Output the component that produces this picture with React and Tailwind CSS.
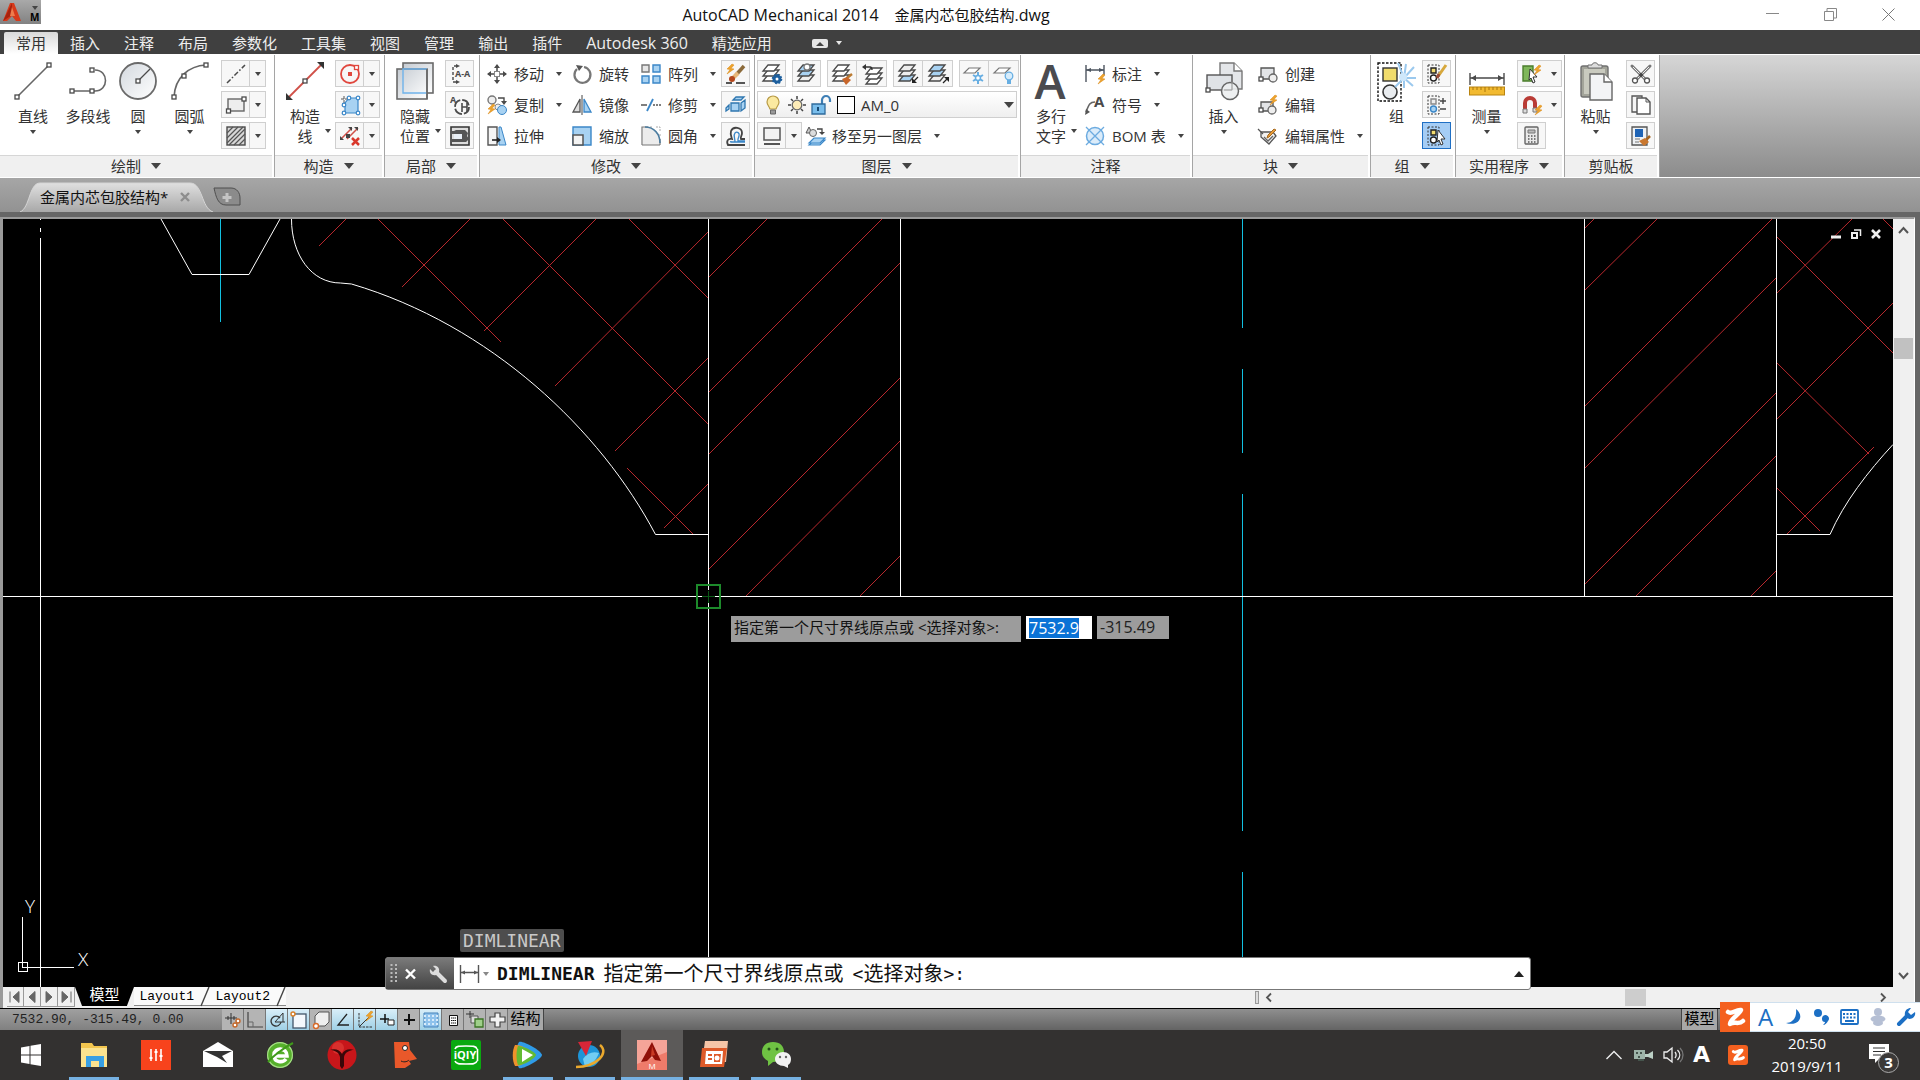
import { useState } from 'react';

const DARK = '#4a4a4a';
const BLUE = '#3b87c8';
const SKY = '#a8d2f2';
const GOLD = '#eda32c';

function Svg({ w = 20, h = 20, children }) {
  return (
    <svg width={w} height={h} viewBox={`0 0 ${w} ${h}`} fill="none" className="block shrink-0 overflow-visible" aria-hidden="true">
      {children}
    </svg>
  );
}

function Node({ x, y, c = DARK }) {
  return <rect x={x - 2} y={y - 2} width="4" height="4" fill="#fff" stroke={c} strokeWidth="1.3" />;
}

function Bolt({ x = 0, y = 0 }) {
  return <path transform={`translate(${x} ${y})`} d="M6 0 1 5l3 .5L1 10l7-5-3-.5L8 1z" fill={GOLD} stroke="#d98818" strokeWidth=".5" />;
}

function Sheet({ x = 0, y = 0, fill = '#fff', stroke = DARK }) {
  return <path transform={`translate(${x} ${y})`} d="M5 0h11l-5 5H0z" fill={fill} stroke={stroke} strokeWidth="1.2" />;
}

function Stack({ top = '#fff', bottom = '#fff' }) {
  return (
    <g stroke={DARK} strokeWidth="1.3">
      <path d="M6 11h11l-5 6H1z" fill={bottom} />
      <path d="M6 6h11l-5 6H1z" fill={top} />
      <path d="M6 1h11l-5 6H1z" fill={top} />
    </g>
  );
}

// Large ribbon icons, 38px square

const LineIcon = () => (
  <Svg w={38} h={38}>
    <path d="M3 35 35 3" stroke="#666" strokeWidth="1.6" />
    <Node x={3} y={35} />
    <Node x={35} y={3} />
  </Svg>
);

const PolylineIcon = () => (
  <Svg w={38} h={38}>
    <path d="M3 29h23c14 0 14-21 0-21" stroke="#666" strokeWidth="1.6" />
    <Node x={3} y={29} />
    <Node x={23} y={29} />
    <Node x={23} y={8} />
  </Svg>
);

const CircleIcon = () => (
  <Svg w={38} h={38}>
    <defs>
      <linearGradient id="disc" x1="0" y1="0" x2="1" y2="1">
        <stop offset="0" stopColor="#d3d8de" />
        <stop offset="1" stopColor="#fff" />
      </linearGradient>
    </defs>
    <circle cx="19" cy="19" r="18" fill="url(#disc)" stroke="#6a6a6a" strokeWidth="1.8" />
    <path d="M19 19 31 7" stroke={DARK} strokeWidth="1.3" />
    <Node x={19} y={19} />
  </Svg>
);

const ArcIcon = () => (
  <Svg w={38} h={38}>
    <path d="M3 35C4 15 18 4 35 3" stroke="#666" strokeWidth="1.6" />
    <Node x={3} y={35} />
    <Node x={13} y={14} />
    <Node x={35} y={3} />
  </Svg>
);

const XlineIcon = () => (
  <Svg w={38} h={38}>
    <path d="M3 35 35 3" stroke="#d05048" strokeWidth="1.8" />
    <path d="M0 38v-7l7 7zM38 0v7l-7-7z" fill="#333" />
    <Node x={19} y={19} />
  </Svg>
);

const HideIcon = () => (
  <Svg w={38} h={38}>
    <defs>
      <linearGradient id="plate" x1="0" y1="0" x2="1" y2="1">
        <stop offset="0" stopColor="#c5cbd2" />
        <stop offset="1" stopColor="#fff" />
      </linearGradient>
    </defs>
    <rect x="7" y="1" width="30" height="30" fill="url(#plate)" stroke="#6a6a6a" strokeWidth="1.6" />
    <rect x="1" y="7" width="30" height="30" fill="url(#plate)" stroke="#6a6a6a" strokeWidth="1.6" />
    <path d="M31 31H7V7h24" stroke="#6fb3ea" strokeWidth="1.4" />
    <path d="M31 7v30" stroke="#6a6a6a" strokeWidth="1.6" />
  </Svg>
);

const MtextIcon = () => (
  <Svg w={38} h={38}>
    <text x="18" y="37" textAnchor="middle" fontFamily="Open Sans" fontWeight="600" fontSize="47" fill="#4b4b4f">A</text>
  </Svg>
);

const InsertIcon = () => (
  <Svg w={38} h={38}>
    <path d="M15 1h14l8 8v18H15z" fill="#e4e6e9" stroke="#777" strokeWidth="1.4" />
    <path d="M29 1v8h8" fill="#fff" stroke="#777" strokeWidth="1.4" />
    <rect x="2" y="13" width="25" height="15" fill="#dfe2e6" stroke="#555" strokeWidth="1.4" />
    <circle cx="25" cy="29" r="8.5" fill="#eceef0" fillOpacity=".9" stroke="#666" strokeWidth="1.5" />
    <path d="M27 20v8h-8" stroke="#999" />
    <Node x={3} y={28} />
  </Svg>
);

const GroupIcon = () => (
  <Svg w={40} h={40}>
    <rect x="1" y="1" width="23" height="38" stroke="#111" strokeWidth="1.4" strokeDasharray="2.5 1.5" />
    <rect x="6" y="6" width="14" height="13" fill="#f1dc6c" stroke="#333" strokeWidth="1.4" />
    <circle cx="13" cy="30" r="7" fill="#e9ecef" stroke="#333" strokeWidth="1.6" />
    <path d="M27 16 21 1M27 16 29 2M27 16 37 5M27 16h12M27 16l9 8M27 16v10M27 16l-9 9" stroke="#9bc9ee" strokeWidth="2" />
    <circle cx="26" cy="15" r="4" fill="#cfe8fb" />
  </Svg>
);

const MeasureIcon = () => (
  <Svg w={38} h={38}>
    <path d="M2 11v12M36 11v12M2 16h34" stroke={DARK} strokeWidth="1.4" />
    <path d="m3 16 5-3v6zM35 16l-5-3v6z" fill={DARK} />
    <rect x="1.5" y="25" width="35" height="8" fill="#f2ba31" stroke="#b98410" />
    <path d="M5 25v3M9 25v3M13 25v3M17 25v5M21 25v3M25 25v3M29 25v3M33 25v3" stroke="#a8760d" />
  </Svg>
);

const PasteIcon = () => (
  <Svg w={38} h={38}>
    <rect x="4" y="4" width="27" height="31" rx="2" fill="#a3a49a" stroke="#707070" strokeWidth="1.4" />
    <rect x="7" y="7" width="21" height="25" fill="#c9cabf" />
    <path d="M11 6V3h4c0-3 6-3 6 0h4v3z" fill="#ddd" stroke="#707070" />
    <path d="M13 12h14l8 8v18H13z" fill="#f3f4f6" stroke="#666" strokeWidth="1.4" />
    <path d="M27 12v8h8" fill="#fff" stroke="#666" strokeWidth="1.4" />
  </Svg>
);

// Small ribbon icons, 20px square

const icons = {
  centerline: <path d="M1 19 19 1" stroke={DARK} strokeWidth="1.5" strokeDasharray="5 2 1.5 2" />,
  rectangle: <><rect x="2" y="4" width="16" height="12" fill="#eee" stroke="#666" strokeWidth="1.4" /><Node x={2.5} y={16} /><Node x={18} y={4} /></>,
  hatch: <><rect x="1" y="1" width="18" height="18" fill="#d8d8d8" stroke={DARK} strokeWidth="1.4" /><path d="M1 7 7 1M1 12 12 1M1 17 17 1M3 19 19 3M8 19 19 8M13 19l6-6" stroke="#555" strokeWidth="1.2" /></>,
  redCircle: <><circle cx="10" cy="10" r="9" stroke="#e0473e" strokeWidth="1.8" /><rect x="8" y="8" width="4" height="4" fill="#e0473e" /><Node x={16.5} y={3.5} c="#e0473e" /></>,
  contour: <><path d="M5 18V8l4-5h9v15z" fill={SKY} stroke={BLUE} strokeWidth="1.2" /><path d="M1 4h7M4 1v7M2 18h4" stroke="#555" strokeDasharray="3 1" /><g fill="#fff" stroke={BLUE} strokeWidth="1.2"><circle cx="4" cy="10" r="1.8" /><circle cx="9" cy="3" r="1.8" /><circle cx="18" cy="3" r="1.8" /><circle cx="18" cy="18" r="1.8" /><circle cx="4" cy="18" r="1.8" /></g></>,
  eraseXlines: <><path d="M1 13 12 2M7 13 18 2" stroke="#d05048" strokeWidth="1.5" /><path d="M0 14v-4l4 4zM12 1v4L8 1zM18 1v4l-4-4zM6 8h4v4H6z" fill="#444" /><path d="m12 12 7 7M19 12l-7 7" stroke="#d9372c" strokeWidth="2.5" /></>,
  section: <><path d="M7 2H3v16h4" stroke={DARK} strokeWidth="1.4" strokeDasharray="3 2" /><path d="m6 0 4 2-4 2zM6 16l4 2-4 2z" fill={DARK} /><text x="5" y="13" fontSize="9" fontWeight="700" fontFamily="Open Sans" fill={DARK}>A-A</text></>,
  detail: <><circle cx="12" cy="12" r="7" stroke={DARK} strokeWidth="1.8" strokeDasharray="9 2" /><path d="M12 8v9M17 8v9M12 12h5" stroke={DARK} strokeWidth="1.6" /><text x="0" y="8" fontSize="9" fontWeight="700" fontFamily="Open Sans" fill={DARK}>A</text></>,
  breakout: <><path d="M1 1h18v18H1z" fill="#ddd" stroke="#333" strokeWidth="1.6" /><path d="M1 5h3l2-1h9l3 3-1 3 2 3-3 3H1v-3h3V8H1z" fill="#555" /><path d="M4 8h8v5H4z" fill="#e8eef5" /></>,
  move: <><path d="M10 1v18M1 10h18" stroke={DARK} strokeWidth="1.5" /><path d="m10 0 3 4H7zM10 20l3-4H7zM0 10l4-3v6zM20 10l-4-3v6z" fill={DARK} /><rect x="7.5" y="7.5" width="5" height="5" fill="#fff" stroke="#888" /></>,
  copy: <><circle cx="5" cy="5" r="4" fill="#eee" stroke="#777" strokeWidth="1.4" /><path d="M11 3h6v4" stroke={DARK} strokeWidth="1.4" /><path d="m14 6 3 4 3-4z" fill={DARK} /><Bolt x={0} y={9} /><circle cx="11" cy="12" r="3" fill="#eee" stroke="#888" /><circle cx="15" cy="15" r="4.5" fill={SKY} stroke={BLUE} /></>,
  stretch: <><path d="M1 1h9v18H1z" fill="#f4f4f4" stroke="#555" strokeWidth="1.4" /><path d="M12 1h2l5 18h-7z" fill={SKY} stroke={BLUE} /><path d="M5 14h6" stroke="#222" strokeWidth="1.6" /><path d="m10 11 4 3-4 3z" fill="#222" /></>,
  rotate: <><path d="M12 3a8 8 0 1 1-7 2" stroke="#777" strokeWidth="2.2" /><path d="m4 1 7 1-4 5z" fill="#555" /></>,
  mirror: <><path d="M8 4v13H1z" fill="#ddd" stroke="#555" strokeWidth="1.3" /><path d="M12 4v13h7z" fill={SKY} stroke={BLUE} strokeWidth="1.3" /><path d="M10 0v20" stroke="#444" /></>,
  scale: <><path d="M1 1h18v18H1z" fill={SKY} stroke={BLUE} strokeWidth="1.4" /><path d="M1 9h10v10H1z" fill="#f3f3f3" stroke="#555" strokeWidth="1.5" /></>,
  array: <><path d="M1 1h7v7H1z" fill="#e6e6e6" stroke="#777" strokeWidth="1.4" /><path d="M12 1h7v7h-7zM1 12h7v7H1zM12 12h7v7h-7z" fill={SKY} stroke={BLUE} strokeWidth="1.4" /></>,
  trim: <><path d="M0 10h6" stroke="#555" strokeWidth="1.5" /><path d="M12 10h8" stroke="#555" strokeWidth="1.5" strokeDasharray="2 1" /><path d="M6 16 12 4" stroke={BLUE} strokeWidth="1.8" /></>,
  fillet: <><path d="M2 1c10 0 16 7 17 18H2z" fill="#ececec" /><path d="M9 1h3M15 1h4v4M19 8v3" stroke="#aaa" strokeDasharray="2 1" /><path d="M1 19V1h6M19 19v-6M1 19h18" stroke="#777" strokeWidth="1.2" /><path d="M4 1c9 0 15 7 15 16" stroke="#4c7c9f" strokeWidth="1.6" /></>,
  erase: <><Bolt x={0} y={0} /><path d="m18 2-8 9" stroke="#8b6a3a" strokeWidth="3.5" /><path d="m12 9-6 6" stroke="#e8b87a" strokeWidth="4" /><circle cx="6" cy="15" r="3" fill="#b4471c" /><path d="M0 19h6M10 19h9" stroke="#222" strokeWidth="1.3" /></>,
  explode: <g fill={SKY} stroke="#2f77b0" strokeWidth="1.3"><path d="M5 8h8v8H5z" /><path d="m7 5 3-3h8l-3 3zM15 8l4-3v8l-4 3zM3 10l-3 3v3l3-2z" /></g>,
  offset: <><path d="M19 19H2c-2-4 0-7 4-6-1-3-2-5-1-8 2-5 11-4 11 2 0 3-2 4-1 6h4" stroke="#444" strokeWidth="1.8" /><path d="M19 16H5c-1 0 0-1 1 0h3c0-4-2-7 0-9 2-2 5 0 4 3l-1 3v2h7" stroke={BLUE} strokeWidth="1.3" /></>,
  layerProps: <><Stack /><circle cx="15" cy="15" r="3" fill="#fff" stroke="#1d5f9e" strokeWidth="3" /><circle cx="15" cy="15" r="4.6" stroke="#1d5f9e" strokeWidth="1.4" strokeDasharray="1.8 1.8" /></>,
  layerStates: <><Stack top={SKY} bottom="#eee" /><circle cx="10" cy="3" r="3" fill="#fff" stroke="#777" strokeWidth="1.3" /></>,
  layerMatch: <><Stack /><path d="m20 10-5 4" stroke="#bb7b32" strokeWidth="2.5" /><path d="m10 15 5-2 4 3-5 5z" fill="#c8662a" /></>,
  layerPrev: <><g transform="translate(3 3)"><Stack /></g><path d="M3 3h5c2 0 2 3 2 3" stroke="#333" strokeWidth="1.4" /><path d="m0 3 4-3v6z" fill="#333" /></>,
  layerIso: <><Stack top="#eee" bottom={SKY} /><path d="m20 13-5 5" stroke="#222" strokeWidth="1.3" /><path d="M14 19v-5l5 5z" fill="#222" /></>,
  layerUniso: <><Stack bottom="#eee" top={SKY} /><path d="m20 14-5 5" stroke="#222" strokeWidth="1.3" /><path d="M21 13v5l-5-5z" fill="#222" /></>,
  layerFreeze: <><Sheet y={4} stroke="#777" /><path d="M14 8v12M9 11l10 6M19 11 9 17" stroke="#67aee2" strokeWidth="2" /><circle cx="14" cy="14" r="2.5" fill="#fff" stroke="#67aee2" strokeWidth="1.5" /></>,
  layerOff: <><Sheet y={4} stroke="#777" /><circle cx="15" cy="12" r="3.8" fill="#d6ecfb" stroke="#67aee2" strokeWidth="1.3" /><path d="M13 16h4v4h-4z" fill="#67aee2" /></>,
  bulb: <><path d="M7 14C6 11 4 10 4 7a6 6 0 0 1 12 0c0 3-2 4-3 7z" fill="#fbe9a0" stroke="#b79a45" strokeWidth="1.2" /><path d="M7.500 15h5v4h-5z" fill="#999" stroke="#666" /></>,
  sun: <><path d="M10 1v3M10 16v3M1 10h3M16 10h3M4 4l2 2M14 14l2 2M16 4l-2 2M6 14l-2 2" stroke="#444" strokeWidth="1.5" /><circle cx="10" cy="10" r="4.8" fill="#fdecb8" stroke="#666" strokeWidth="1.3" /></>,
  unlock: <><path d="M11 9V5a4 4 0 0 1 8 0v2" stroke="#3e7fb5" strokeWidth="2.2" /><path d="M1 9h13v10H1z" fill="#79bdeb" stroke="#2f6b9c" strokeWidth="1.3" /><path d="M7 12v4" stroke="#174b75" strokeWidth="2" /></>,
  layerColor: <><path d="M2 2h16v12H2z" fill="#f2f2f2" stroke="#555" strokeWidth="1.5" /><path d="M2 18h16" stroke="#555" strokeWidth="2" /></>,
  moveLayer: <><path d="m4 1 3 6H1z" fill="#ccc" stroke="#555" /><circle cx="8" cy="7" r="3.5" fill="#ddd" stroke="#666" /><path d="M12 3h5v3" stroke="#444" strokeWidth="1.3" /><path d="m14 6 3 3 3-3z" fill="#444" /><Sheet x={4} y={14} fill={SKY} stroke={BLUE} /><Sheet x={4} y={12} fill={SKY} stroke={BLUE} /></>,
  dim: <><path d="M1 1v17M19 1v10M1 6h18" stroke="#4d5560" strokeWidth="1.4" /><path d="m1 6 5-2v4zM19 6l-5-2v4z" fill="#4d5560" /><Bolt x={12} y={10} /></>,
  symbol: <><path d="M1 17C4 9 5 7 10 7" stroke="#666" strokeWidth="1.6" /><path d="m0 20 1-6 4 3z" fill="#555" /><text x="9" y="12" fontSize="15" fontWeight="700" fontFamily="Open Sans" fill={DARK}>A</text></>,
  bom: <><circle cx="10" cy="10" r="8.5" fill="#dbecfa" stroke="#6cabe0" strokeWidth="1.5" /><path d="m1 1 18 18M19 1 1 19" stroke="#6cabe0" strokeWidth="1.3" /></>,
  blockCreate: <><path d="M3 4h13v11H3z" fill="#e2e4e7" stroke="#555" strokeWidth="1.3" /><circle cx="15" cy="14" r="4" fill="#eee" stroke="#666" strokeWidth="1.3" /><Node x={3} y={15} /></>,
  blockEdit: <><path d="M3 7h12v9H3z" fill="#e2e4e7" stroke="#555" strokeWidth="1.3" /><circle cx="14" cy="15" r="4" fill="#eee" stroke="#666" strokeWidth="1.3" /><Node x={3} y={15} /><Bolt x={11} /></>,
  attr: <><path d="M3 6h12l3 4-7 8-8-7z" fill="#f2f2f2" stroke="#555" strokeWidth="1.3" /><path d="m0 3 5 5" stroke="#555" strokeWidth="1.3" /><path d="m18 4-7 7-2 1 1-3 6-6z" fill="#e59b3c" stroke="#a86a1d" /><path d="m6 11 4 4 5-5" stroke="#666" strokeWidth="1.3" /></>,
  groupEdit: <><path d="M1 1h11v18H1z" stroke="#333" strokeDasharray="2 1.5" /><path d="M4 4h5v5H4z" fill="#f3dd70" stroke="#222" strokeWidth="1.4" /><circle cx="6.5" cy="14" r="3" fill="#fff" stroke="#222" strokeWidth="1.4" /><path d="m19 1-7 10" stroke="#d7a83c" strokeWidth="3" /><path d="m12 10-2 4" stroke="#9b4a35" strokeWidth="3" /></>,
  groupAdd: <><path d="M1 1h11v18H1z" stroke="#333" strokeDasharray="2 1.5" /><path d="M4 4h5v5H4z" fill="#eee" stroke="#888" strokeWidth="1.4" /><circle cx="6.5" cy="14" r="3" fill={SKY} stroke={BLUE} strokeWidth="1.4" /><path d="M13 6h6M16 3v6M13 14h6" stroke="#444" strokeWidth="1.4" /></>,
  groupSelect: <><path d="M1 1h11v18H1z" stroke="#333" strokeDasharray="2 1.5" /><path d="M4 4h5v5H4z" fill="#f3dd70" stroke="#222" strokeWidth="1.4" /><circle cx="6.5" cy="14" r="3" fill="#fff" stroke="#222" strokeWidth="1.4" /><path d="m11 4 7 9h-4l2 5-2 1-2-5-2 2z" fill="#fff" stroke="#333" /></>,
  quickSelect: <><path d="M1 2h10v15H1z" fill="#7fb75a" stroke="#4b7e2c" strokeWidth="1.4" /><path d="m8 5 7 8h-4l2 5-2 1-2-5-2 2z" fill="#fff" stroke="#333" /><Bolt x={11} y={1} /></>,
  magnet: <><path d="M3 16V8a5 5 0 0 1 10 0v5" stroke="#b93b35" strokeWidth="4" /><path d="M1 14h4v4H1zM11 13h4v4h-4z" fill="#ddd" stroke="#777" /><Bolt x={12} y={10} /></>,
  calc: <><rect x="3" y="1" width="13" height="17" rx="1" fill="#e8e8e8" stroke="#666" strokeWidth="1.4" /><path d="M6 4h7v3H6z" fill="#bbb" stroke="#777" /><path d="M6 10h8M6 13h8M6 16h8" stroke="#555" strokeWidth="1.5" strokeDasharray="1.5 1.5" /></>,
  cut: <><path d="m1 2 13 13M19 2 6 15" stroke="#777" strokeWidth="3" strokeLinecap="round" /><path d="m2 3 12 12M18 3 6 15" stroke="#eee" strokeWidth="1" /><circle cx="10" cy="11" r="2" fill="#444" /><circle cx="4" cy="16.5" r="2.5" fill="#fff" stroke="#555" strokeWidth="1.3" /><circle cx="16" cy="16.5" r="2.5" fill="#fff" stroke="#555" strokeWidth="1.3" /></>,
  copyClip: <><path d="M1 1h10v16H1z" fill="#f5f5f5" stroke="#555" strokeWidth="1.3" /><path d="M6 3h9l4 4v12H6z" fill="#fff" stroke="#555" strokeWidth="1.4" /><path d="M15 3v4h4" stroke="#555" /></>,
  matchProps: <><path d="M1 1h15v18H1z" fill="#eef1f4" stroke="#555" strokeWidth="1.3" /><path d="M4 3h8v8H4z" fill="#1e63b5" /><path d="M4 13h5M4 16h4" stroke="#777" /><path d="m19 10-4 4" stroke="#a6641f" strokeWidth="2.5" /><path d="m8 15 6-3 4 4-5 4z" fill="#c9772e" /></>,
};

const Icon = ({ name }) => <Svg>{icons[name]}</Svg>;

function Caret({ big = false }) {
  return big ? (
    <Svg w={10} h={6}><path d="M0 0h10L5 6z" fill="#444" /></Svg>
  ) : (
    <Svg w={6} h={4}><path d="M0 0h6L3 4z" fill="#444" /></Svg>
  );
}

function BigButton({ icon, label, second, caret, width }) {
  return (
    <button className={`relative flex flex-col items-center pt-[2px] ${width}`}>
      <span className="flex h-[44px] items-start justify-center">{icon}</span>
      <span className="leading-[20px] whitespace-nowrap">{label}</span>
      {second && (
        <>
          <span className="leading-[20px]">{second}</span>
          <span className="absolute right-0 bottom-[22px]"><Caret /></span>
        </>
      )}
      {caret && <span className="pt-1"><Caret /></span>}
    </button>
  );
}

const boxed = 'border border-[#cfcfcf] bg-[#f7f7f7]';

function IconButton({ name, active }) {
  return (
    <button
      aria-label={name}
      className={`flex h-[27px] w-[29px] items-center justify-center border ${active ? 'border-[#1f6fc4] bg-[#a5cdf5]' : 'border-[#cfcfcf] bg-[#f7f7f7]'}`}
    >
      <Icon name={name} />
    </button>
  );
}

function SplitButton({ name, joined }) {
  return (
    <div className={`flex h-[27px] ${boxed}`}>
      <button aria-label={name} className={`flex w-[28px] items-center justify-center ${joined ? '' : 'border-r border-[#cfcfcf]'}`}>
        <Icon name={name} />
      </button>
      <button aria-label={`${name} 选项`} className="flex w-[15px] items-center justify-center"><Caret /></button>
    </div>
  );
}

function IconPair({ names }) {
  return (
    <div className={`flex h-[27px] divide-x divide-[#cfcfcf] ${boxed}`}>
      {names.map((name) => (
        <button key={name} aria-label={name} className="flex w-[29px] items-center justify-center"><Icon name={name} /></button>
      ))}
    </div>
  );
}

function ToolRow({ name, label, caret }) {
  return (
    <button className="flex h-[27px] items-center whitespace-nowrap">
      <Icon name={name} />
      <span className="ml-[7px]">{label}</span>
      {caret && <span className="ml-3"><Caret /></span>}
    </button>
  );
}

function Panel({ title, caret = true, width, children }) {
  return (
    <section className={`flex shrink-0 flex-col border-r border-[#a5a5a5] bg-white ${width}`}>
      <div className="flex h-[100px] pt-[5px]">{children}</div>
      <button className="mr-[2px] flex h-[22px] items-center justify-center gap-[10px] border-t border-[#d6d6d6] bg-[#f0f0f0] pb-[2px]">
        {title}
        {caret && <Caret big />}
      </button>
    </section>
  );
}

const Column = ({ children, className = '' }) => <div className={`flex flex-col items-start gap-1 ${className}`}>{children}</div>;

function TitleBar() {
  return (
    <header className="flex h-[30px] items-start bg-white">
      <button aria-label="应用程序菜单" className="flex h-6 w-[41px] items-center gap-2 bg-linear-to-b from-[#a9a9a9] to-[#828282] pl-[2px]">
        <Svg w={20} h={20}>
          <path d="M8 1h4l7 18h-5l-4-5-5 5H1z" fill="#d63a1b" />
          <path d="m10 1-9 18 9-6z" fill="#a8220d" />
          <path d="m10 5 3 9H8z" fill="#ee7c4d" />
        </Svg>
        <span className="flex flex-col items-center gap-[2px] pt-1 text-[10px] leading-[10px] font-bold text-black">
          <Caret />
          M
        </span>
      </button>
      <h1 className="flex flex-1 justify-center gap-4 pt-[5px] text-[16px] leading-[20px] whitespace-nowrap text-[#111]">
        <span>AutoCAD Mechanical 2014</span>
        <span><span className="text-[15px]">金属内芯包胶结构</span>.dwg</span>
      </h1>
      <div className="flex w-[229px] justify-end gap-[45px] pt-2 pr-[25px]">
        <button aria-label="最小化"><Svg w={13} h={13}><path d="M0 5.5h13" stroke="#888" /></Svg></button>
        <button aria-label="还原"><Svg w={13} h={13}><path d="M.5 3.5h9v9h-9zM3 3V.5h9.500V10H10" stroke="#888" /></Svg></button>
        <button aria-label="关闭"><Svg w={13} h={13}><path d="m.5.5 12 12M12.500.5l-12 12" stroke="#777" /></Svg></button>
      </div>
    </header>
  );
}

const ribbonTabs = ['常用', '插入', '注释', '布局', '参数化', '工具集', '视图', '管理', '输出', '插件', 'Autodesk 360', '精选应用'];

function RibbonTabs() {
  const [current, setCurrent] = useState('常用');
  return (
    <nav className="flex h-6 items-end bg-[#404040] pl-1 text-[15px] leading-[20px] text-[#eee]">
      {ribbonTabs.map((tab) => (
        <button
          key={tab}
          onClick={() => setCurrent(tab)}
          className={`h-[22px] rounded-t-[2px] px-3 whitespace-nowrap ${tab.startsWith('Auto') ? 'text-[16px]' : ''} ${tab === current ? 'bg-linear-to-b from-[#d9d9d9] to-white text-[#333]' : ''}`}
        >
          {tab}
        </button>
      ))}
      <button aria-label="最小化功能区" className="ml-[28px] flex h-[22px] items-center gap-2">
        <Svg w={16} h={9}><rect width="16" height="9" rx="2" fill="#e6e6e6" /><path d="M4 7h8L8 3z" fill="#444" /></Svg>
        <Svg w={6} h={4}><path d="M0 0h6L3 4z" fill="#e6e6e6" /></Svg>
      </button>
    </nav>
  );
}

function Ribbon() {
  return (
    <div className="flex border-y border-white bg-linear-to-b from-[#d6d6d6] to-[#8c8c8c] text-[15px] leading-[20px] text-[#333]">
      <Panel title="绘制" width="w-[275px]">
        <div className="flex pl-2">
          <BigButton icon={<LineIcon />} label="直线" caret width="w-[50px]" />
          <BigButton icon={<PolylineIcon />} label="多段线" width="w-[60px]" />
          <BigButton icon={<CircleIcon />} label="圆" caret width="w-[40px]" />
          <BigButton icon={<ArcIcon />} label="圆弧" caret width="w-[63px]" />
        </div>
        <Column>
          <SplitButton name="centerline" />
          <SplitButton name="rectangle" />
          <SplitButton name="hatch" />
        </Column>
      </Panel>

      <Panel title="构造" width="w-[110px]">
        <BigButton icon={<XlineIcon />} label="构造" second="线" width="mx-1 w-[52px]" />
        <Column>
          <SplitButton name="redCircle" />
          <SplitButton name="contour" />
          <SplitButton name="eraseXlines" />
        </Column>
      </Panel>

      <Panel title="局部" width="w-[95px]">
        <BigButton icon={<HideIcon />} label="隐藏" second="位置" width="mx-1 w-[52px]" />
        <Column>
          <IconButton name="section" />
          <IconButton name="detail" />
          <IconButton name="breakout" />
        </Column>
      </Panel>

      <Panel title="修改" width="w-[275px]">
        <Column className="ml-[7px] w-[85px]">
          <ToolRow name="move" label="移动" caret />
          <ToolRow name="copy" label="复制" caret />
          <ToolRow name="stretch" label="拉伸" />
        </Column>
        <Column className="w-[69px]">
          <ToolRow name="rotate" label="旋转" />
          <ToolRow name="mirror" label="镜像" />
          <ToolRow name="scale" label="缩放" />
        </Column>
        <Column className="w-[80px]">
          <ToolRow name="array" label="阵列" caret />
          <ToolRow name="trim" label="修剪" caret />
          <ToolRow name="fillet" label="圆角" caret />
        </Column>
        <Column>
          <IconButton name="erase" />
          <IconButton name="explode" />
          <IconButton name="offset" />
        </Column>
      </Panel>

      <Panel title="图层" width="w-[266px]">
        <Column className="ml-[2px] w-[260px]">
          <div className="flex gap-[6px]">
            <IconButton name="layerProps" />
            <IconButton name="layerStates" />
            <IconPair names={['layerMatch', 'layerPrev']} />
            <IconPair names={['layerIso', 'layerUniso']} />
            <IconPair names={['layerFreeze', 'layerOff']} />
          </div>
          <div className="relative flex h-[27px] w-full items-center gap-1 border border-[#cfcfcf] bg-linear-to-b from-white to-[#efefef] pl-[5px]">
            <Icon name="bulb" />
            <Icon name="sun" />
            <Icon name="unlock" />
            <span className="ml-[2px] h-[18px] w-[18px] border border-black bg-white" />
            <select aria-label="图层" defaultValue="AM_0" className="ml-[2px] flex-1 appearance-none bg-transparent outline-none">
              <option>AM_0</option>
              <option>AM_7</option>
            </select>
            <span className="pointer-events-none absolute right-[2px]"><Caret big /></span>
          </div>
          <div className="flex gap-[3px]">
            <SplitButton name="layerColor" />
            <ToolRow name="moveLayer" label="移至另一图层" caret />
          </div>
        </Column>
      </Panel>

      <Panel title="注释" caret={false} width="w-[172px]">
        <BigButton icon={<MtextIcon />} label="多行" second="文字" width="mr-2 ml-1 w-[52px]" />
        <Column>
          <ToolRow name="dim" label="标注" caret />
          <ToolRow name="symbol" label="符号" caret />
          <ToolRow name="bom" label="BOM 表" caret />
        </Column>
      </Panel>

      <Panel title="块" width="w-[178px]">
        <BigButton icon={<InsertIcon />} label="插入" caret width="mr-1 w-[61px]" />
        <Column>
          <ToolRow name="blockCreate" label="创建" />
          <ToolRow name="blockEdit" label="编辑" />
          <ToolRow name="attr" label="编辑属性" caret />
        </Column>
      </Panel>

      <Panel title="组" width="w-[85px]">
        <BigButton icon={<GroupIcon />} label="组" width="w-[51px]" />
        <Column>
          <IconButton name="groupEdit" />
          <IconButton name="groupAdd" />
          <IconButton name="groupSelect" active />
        </Column>
      </Panel>

      <Panel title="实用程序" width="w-[109px]">
        <BigButton icon={<MeasureIcon />} label="测量" caret width="w-[61px]" />
        <Column>
          <SplitButton name="quickSelect" joined />
          <SplitButton name="magnet" joined />
          <IconButton name="calc" />
        </Column>
      </Panel>

      <Panel title="剪贴板" caret={false} width="w-[95px]">
        <BigButton icon={<PasteIcon />} label="粘贴" caret width="w-[61px]" />
        <Column>
          <IconButton name="cut" />
          <IconButton name="copyClip" />
          <IconButton name="matchProps" />
        </Column>
      </Panel>
    </div>
  );
}

function FileTabs() {
  return (
    <div className="flex h-[34px] items-end bg-linear-to-b from-[#a6a6a6] to-[#929292] pl-5 text-[15px] leading-[20px]">
      <div className="relative flex h-[30px] w-[193px] items-center">
        <svg className="absolute inset-0 h-full w-full" viewBox="0 0 193 30" preserveAspectRatio="none" aria-hidden="true">
          <defs>
            <linearGradient id="tab" x1="0" y1="0" x2="0" y2="1">
              <stop offset="0" stopColor="#e0e0e0" />
              <stop offset="1" stopColor="#a8a8a8" />
            </linearGradient>
          </defs>
          <path d="M0 30C10 26 9 1 20 1h150c13 0 11 25 23 29" fill="url(#tab)" stroke="#d5d5d5" />
        </svg>
        <button className="relative ml-5 text-[#111]">金属内芯包胶结构*</button>
        <button aria-label="关闭文件" className="relative ml-3">
          <Svg w={10} h={10}><path d="m1 1 8 8M9 1 1 9" stroke="#8d8d8d" strokeWidth="2.4" /></Svg>
        </button>
      </div>
      <button aria-label="新建文件" className="mb-[6px]">
        <Svg w={28} h={19}>
          <path d="M1 1h17c6 0 9 5 9 10v7H13C5 18 3 10 1 1z" fill="#8b8b8b" stroke="#4f4f4f" />
          <path d="M14 6v9M9.500 10.500h9" stroke="#c4c4c4" strokeWidth="3" />
        </Svg>
      </button>
    </div>
  );
}

// Model geometry. Hatches are lists of x1, y1, x2, y2.
const rubberHatch = [
  [319, 246, 346, 219], [378, 219, 501, 342], [402, 287, 470, 219], [503, 219, 708, 424],
  [484, 331, 596, 219], [555, 386, 708, 232], [629, 219, 708, 298], [615, 451, 708, 358],
  [627, 468, 693, 534], [664, 528, 708, 484],
  [1776, 236, 1893, 353], [1776, 294, 1852, 219], [1776, 420, 1893, 303], [1776, 362, 1869, 454],
  [1787, 534, 1874, 447], [1776, 487, 1820, 531], [1883, 219, 1893, 229],
];
const metalHatch = [
  [709, 277, 767, 219], [709, 392, 882, 219], [709, 454, 900, 263], [709, 569, 900, 378],
  [746, 596, 900, 441], [860, 596, 900, 556],
  [1585, 228, 1594, 219], [1585, 290, 1657, 219], [1585, 406, 1772, 219], [1585, 468, 1776, 278],
  [1585, 584, 1776, 393], [1636, 596, 1776, 456], [1751, 596, 1776, 571],
];

function Drawing() {
  return (
    <svg className="absolute inset-0 h-full w-full" viewBox="3 219 1890 768" preserveAspectRatio="xMinYMin slice" fill="none" role="img" aria-label="模型空间">
      <g stroke="#b8282d">
        {[...rubberHatch, ...metalHatch].map(([x1, y1, x2, y2]) => (
          <line key={`${x1}-${y1}-${x2}`} x1={x1} y1={y1} x2={x2} y2={y2} />
        ))}
      </g>
      <g stroke="#12c0e0" shapeRendering="crispEdges">
        <path d="M220.500 219v103M1242.500 219v109M1242.500 369v84M1242.500 494v337M1242.500 872v90" />
      </g>
      <g stroke="#fff">
        <path d="M161 219l31 55.500h57l31-55.500" />
        <path d="M291.500 219c0 36 20 64 49 64l11 1c139 41 249 146 304 250.500h53" />
        <path d="M1776 534.500h54c14-32 38-63 63-90" />
        <g shapeRendering="crispEdges">
          <path d="M40.500 219v1M40.500 228v4M40.500 238v749" />
          <path d="M900.500 219v377M1584.500 219v377M1776.500 219v377" />
          <path d="M708.500 219v371M708.500 603v384M3 596.500h699M715 596.500h1178" />
          <path d="M22.500 917v50.500h51" />
          <path d="M18.500 962.500h9v9h-9z" />
        </g>
      </g>
      <rect x="697" y="585" width="23" height="23" stroke="#1d8a2b" strokeWidth="2" />
      <path d="M708.500 591v12M702 596.500h13" stroke="#0c5a18" />
      <g fill="#fff" fontFamily="Open Sans" fontWeight="300" fontSize="19">
        <text x="25" y="913">Y</text>
        <text x="78" y="966">X</text>
      </g>
    </svg>
  );
}

function DynamicInput() {
  return (
    <div className="absolute top-[397px] left-[728px] flex items-start gap-[5px] text-[15px]">
      <label htmlFor="dyn-x" className="h-[26px] w-[290px] bg-[#9c9c9c] pl-[3px] leading-[22px] whitespace-nowrap text-[#111]">
        指定第一个尺寸界线原点或 &lt;选择对象&gt;:
      </label>
      <span className="flex h-[23px] w-[66px] items-center bg-white pl-[3px]">
        <input id="dyn-x" defaultValue="7532.9" className="field-sizing-content h-[20px] bg-[#0a72d6] text-[16px] leading-[20px] text-white outline-none" />
      </span>
      <input aria-label="Y" defaultValue="-315.49" className="h-[23px] w-[72px] bg-[#9c9c9c] pl-[3px] text-[16px] leading-[23px] text-[#222] outline-none" />
    </div>
  );
}

function CommandLine() {
  return (
    <div className="absolute bottom-[-3px] left-[382px] z-10 w-[1146px] max-w-full font-['DejaVu_Sans_Mono','Noto_Sans_CJK_SC',monospace] text-[18px]">
      <div className="mb-[5px] ml-[75px] h-[23px] w-fit rounded-[2px] bg-[#4d4d4d] px-[3px] leading-[23px] text-[#c8c8c8]">DIMLINEAR</div>
      <div className="flex h-[33px] items-center rounded-[3px] border border-[#777] bg-white">
        <div className="flex h-full w-[68px] shrink-0 items-center bg-linear-to-b from-[#7a7a7a] to-[#444] pl-1">
          <Svg w={8} h={22}><path d="M1.500 1v20M6 1v20" stroke="#bbb" strokeWidth="2" strokeDasharray="2 2" /></Svg>
          <button aria-label="关闭命令行" className="ml-[7px]"><Svg w={11} h={12}><path d="m1 1.500 9 9M10 1.500l-9 9" stroke="#fff" strokeWidth="2.4" /></Svg></button>
          <button aria-label="自定义" className="ml-[13px]">
            <Svg w={18} h={18}><path d="M7 7 16 16" stroke="#ddd" strokeWidth="4" strokeLinecap="round" /><path d="M4 1 7 4 4 7 1 4c-1 4 2 7 6 6l3-3c1-4-2-7-6-6z" fill="#ddd" /></Svg>
          </button>
        </div>
        <button aria-label="最近使用的命令" className="ml-[5px] flex items-center gap-[3px]">
          <Svg w={21} h={18}><path d="M1.500 0v18M19.500 0v18M2 7.500h17" stroke="#555" strokeWidth="1.4" /><path d="m2 7.500 4-2v4zM19 7.500l-4-2v4z" fill="#555" /></Svg>
          <Svg w={6} h={4}><path d="M0 0h6L3 4z" fill="#888" /></Svg>
        </button>
        <label htmlFor="command" className="ml-2 flex items-center gap-[9px] leading-[28px] whitespace-nowrap text-[#111]">
          <b>DIMLINEAR</b>
          <span className="text-[20px]">指定第一个尺寸界线原点或</span>
          <span className="flex items-center">&lt;<span className="text-[20px]">选择对象</span>&gt;:</span>
        </label>
        <input id="command" className="ml-1 min-w-0 flex-1 outline-none" />
        <button aria-label="命令历史" className="mr-[6px]"><Svg w={10} h={6}><path d="M0 6h10L5 0z" fill="#222" /></Svg></button>
      </div>
    </div>
  );
}

function ScrollColumn() {
  return (
    <div className="flex w-[21px] flex-col items-center justify-between bg-[#f0f0f0] py-[7px]">
      <button aria-label="向上滚动"><Svg w={11} h={8}><path d="m1 7 4.500-5L10 7" stroke="#555" strokeWidth="2" /></Svg></button>
      <div className="w-full flex-1 pt-[104px]"><div className="mx-[1px] h-[21px] bg-[#c1c1c1]" /></div>
      <button aria-label="向下滚动"><Svg w={11} h={8}><path d="m1 1 4.500 5L10 1" stroke="#555" strokeWidth="2" /></Svg></button>
    </div>
  );
}

const navPaths = ['M3 2.500v11M12 2.500v11L6 8z', 'M11 2.500v11L5 8z', 'M5 2.500v11L11 8z', 'M13 2.500v11M4 2.500v11L10 8z'];

function LayoutTabs() {
  return (
    <div className="flex h-[21px] items-start bg-[#f0f0f0] pl-[4px] font-['Liberation_Mono','Noto_Sans_CJK_SC',monospace] text-[13px] leading-[19px] text-black">
      {navPaths.map((d) => (
        <button key={d} aria-label="切换布局" className="flex h-[20px] w-[17px] items-center justify-center border-r border-b border-[#999] bg-[#f0f0f0]">
          <Svg w={16} h={16}><path d={d} fill="#666" stroke="#666" strokeWidth="1" /></Svg>
        </button>
      ))}
      <button className="h-[19px] w-[59px] bg-black text-[15px] text-white [clip-path:polygon(0_0,100%_0,88%_100%,12%_100%)]">模型</button>
      {['Layout1', 'Layout2'].map((name) => (
        <button key={name} className="flex h-[19px] w-[76px] items-center justify-end border-b border-[#888] bg-[#fafafa]">
          {name}
          <span className="ml-[6px]"><Svg w={10} h={19}><path d="M1 19 9 0" stroke="#444" strokeWidth="1.4" /></Svg></span>
        </button>
      ))}
      <div className="flex-1" />
      <div className="flex h-full w-[659px] items-center">
        <span className="h-[13px] w-[4px] border border-[#999] bg-[#ddd]" />
        <button aria-label="向左滚动" className="ml-[7px]"><Svg w={6} h={9}><path d="M5 .5 1 4.500l4 4" stroke="#555" strokeWidth="1.8" /></Svg></button>
        <div className="flex flex-1 justify-end pr-[234px]"><div className="h-[17px] w-[21px] bg-[#cdcdcd]" /></div>
        <button aria-label="向右滚动" className="mr-[28px]"><Svg w={6} h={9}><path d="m1 .5 4 4-4 4" stroke="#555" strokeWidth="1.8" /></Svg></button>
      </div>
    </div>
  );
}

const statusToggles = [
  { id: '推断约束', art: <><path d="M8 3v11M2 8h12M5 6v4M11 6v4" stroke="#333" /><circle cx="15" cy="11" r="2" fill="#fff" stroke="#c4682a" strokeWidth="1.4" /><circle cx="12" cy="15" r="2" fill="#fff" stroke="#c4682a" strokeWidth="1.4" /></> },
  { id: '正交', art: <><path d="M3 2v15h15" stroke="#444" strokeWidth="1.2" /><path d="M3 12h5v5" stroke="#666" /></> },
  { id: '极轴', on: true, art: <><path d="M13 8a5 5 0 1 0 1 4" stroke="#333" strokeWidth="1.3" /><path d="m8 12 8-9v9M8 12h10" stroke="#333" /></> },
  { id: '对象捕捉', on: true, art: <><rect x="4" y="4" width="13" height="14" fill="#f4f8fc" stroke="#44566a" strokeWidth="1.3" /><circle cx="4" cy="4" r="2" fill="#fff" stroke="#d98028" strokeWidth="1.4" /></> },
  { id: '三维捕捉', art: <><path d="m4 6 4-4h10v10l-4 4H4z" fill="#eee" stroke="#555" /><circle cx="5" cy="16" r="2.5" fill="#fff" stroke="#d96a28" strokeWidth="1.4" /></> },
  { id: '对象追踪', on: true, art: <path d="M14 4 5 15h11" stroke="#222" strokeWidth="1.3" /> },
  { id: '动态坐标', on: true, art: <><path d="M4 3v14h14" stroke="#333" strokeDasharray="2.5 1" /><path d="M4 17 14 7" stroke="#333" /><Bolt x={10} y={1} /></> },
  { id: '动态输入', on: true, art: <><path d="M8 4v9M3 9h9" stroke="#111" strokeWidth="1.5" /><path d="M11 10h6v5h-6z" fill="#fff" stroke="#222" /></> },
  { id: '线宽', art: <path d="M10 4v11M5 10h11" stroke="#111" strokeWidth="2" /> },
  { id: '透明度', on: true, art: <><path d="M3 3h14v14H3z" fill="#8ec2ec" stroke="#4683ba" /><path d="M3 6h14M3 10h14M3 14h14" stroke="#d7ebfa" strokeWidth="2" strokeDasharray="2 2" /></> },
  { id: '快捷特性', art: <><path d="M6.500 5.500h8v10h-8z" fill="#fff" stroke="#111" /><path d="M8 8h5M8 10.500h5M8 13h5" stroke="#111" strokeDasharray="1.5 .5" /></> },
  { id: '选择循环', art: <><path d="M5 1v7M1 4h8" stroke="#333" /><path d="M6 6h7v7H6z" fill="#ddd" stroke="#555" /><path d="M10 9h8v8h-8z" fill="#9fcf8a" stroke="#3c7526" strokeWidth="1.3" /></> },
  { id: '注释监视器', art: <path d="M8 3h5v4h5v5h-5v5H8v-5H3V7h5z" fill="#f2f2f2" stroke="#444" strokeWidth="1.2" /> },
];

function StatusBar() {
  return (
    <footer className="flex h-[22px] border-t border-black bg-linear-to-b from-[#8f8f8f] to-[#646464] font-['Liberation_Mono','Noto_Sans_CJK_SC',monospace] text-black">
      <div className="w-[222px] bg-linear-to-b from-[#a0a0a0] to-[#808080] pl-3 text-[13px] leading-[22px] whitespace-nowrap text-[#222]">7532.90, -315.49, 0.00</div>
      {statusToggles.map(({ id, on, art }) => (
        <button
          key={id}
          aria-label={id}
          aria-pressed={Boolean(on)}
          className={`flex h-full w-[22px] shrink-0 items-center justify-center border-r border-[#777] ${on ? 'bg-linear-to-b from-[#d9eef8] to-[#9fd0e6]' : 'bg-[#b4b4b4]'}`}
        >
          <Svg>{art}</Svg>
        </button>
      ))}
      <button className="w-[36px] border-r border-[#444] bg-[#a8a8a8] pt-[2px] text-[15px] leading-[19px]">结构</button>
      <div className="flex-1" />
      <button className="mr-[202px] w-[37px] border-x border-[#444] bg-[#a8a8a8] pt-[2px] text-[15px] leading-[19px]">模型</button>
    </footer>
  );
}

const SogouMark = ({ size }) => (
  <svg width={size} height={size} viewBox="0 0 30 30" fill="none" className="block" aria-hidden="true">
    <rect width="30" height="30" fill="#f4601f" />
    <path d="M8 10c4 3 8-3 13-2-2 5-10 8-11 14 4-3 9 1 13-3" stroke="#fff" strokeWidth="4.5" strokeLinecap="round" strokeLinejoin="round" />
  </svg>
);

function ImeBar() {
  const c = '#1c6fc4';
  return (
    <div className="absolute right-0 bottom-[48px] z-20 flex h-[30px] w-[200px] items-center border-y border-[#cfe0ee] bg-white">
      <button aria-label="输入法" className="h-[30px] w-[30px]"><SogouMark size={30} /></button>
      <button className="ml-[7px] w-[17px] text-[24px] leading-[28px] text-[#1c6fc4]">A</button>
      <button aria-label="全角半角" className="ml-3"><Svg w={16} h={18}><path d="M10 1c9 7 3 18-10 14 7 0 11-6 10-14z" fill={c} /></Svg></button>
      <button aria-label="标点" className="ml-[11px]"><Svg w={17} h={18}><circle cx="5" cy="5" r="4" fill={c} /><path d="M9 11a3.500 3.500 0 1 1 6 2c-1 2-3 4-5 4 1-1 2-2 2-3-2 0-3-1-3-3z" fill={c} /></Svg></button>
      <button aria-label="软键盘" className="ml-[10px]"><Svg w={19} h={16}><rect x="1" y="1" width="17" height="14" rx="1" stroke={c} strokeWidth="1.8" /><path d="M3 5h13M3 8.500h13" stroke={c} strokeWidth="2" strokeDasharray="2 1.5" /><path d="M5 12h9" stroke={c} strokeWidth="2" /></Svg></button>
      <button aria-label="账户" className="ml-[11px]"><Svg w={16} h={18}><circle cx="8" cy="4" r="4" fill="#b5bfd4" /><ellipse cx="8" cy="11" rx="7.5" ry="3.5" fill="#b5bfd4" /><ellipse cx="8" cy="15" rx="5" ry="3" fill="#b5bfd4" /></Svg></button>
      <button aria-label="设置" className="ml-[11px]"><Svg w={18} h={18}><path d="M2 16 10 8" stroke={c} strokeWidth="4" strokeLinecap="round" /><path d="M14 0 11 4l3 3 4-3c1 4-2 7-6 7L8 8c-1-5 2-8 6-8z" fill={c} /></Svg></button>
    </div>
  );
}

const apps = [
  { id: '开始', art: <path d="m4 7.500 8.500-1.500v8.500H4zM13.500 5.800 24 4v10.500H13.500zM4 15.500h8.500V24L4 22.500zM13.500 15.500H24V26l-10.500-1.800z" fill="#fff" /> },
  { id: '文件资源管理器', open: true, art: <><path d="M2 3h11l2 3h13v21H2z" fill="#f3c64f" /><path d="M2 8h26v19H2z" fill="#fbe38f" /><path d="M7 27V16h18v11h-5v-6h-8v6z" fill="#38a0e4" /></> },
  { id: '混音', art: <><path d="M0 0h30v30H0z" fill="#f8431c" /><path d="M10 9v12M15 9v12M20 9v12" stroke="#fff" strokeWidth="1.6" /><path d="M8.500 18h3M13.500 12h3M18.500 16h3" stroke="#fff" strokeWidth="2" /></> },
  { id: '邮件', art: <><path d="m0 11 15-9 15 9v16H0z" fill="#fff" /><path d="m1 11h28L19 16l5 7-10-6z" fill="#333" /></> },
  { id: '浏览器', art: <><circle cx="15" cy="15" r="13" fill="#56b02b" /><circle cx="15" cy="15" r="12.4" stroke="#a8dc8a" strokeWidth="1.2" /><path d="M8 16h14c0-9-13-9-13-1 0 8 9 8 12 4" stroke="#fff" strokeWidth="3.6" /><path d="M3 22C8 16 20 7 28 3" stroke="#3f9a1a" strokeWidth="2" /></> },
  { id: '游戏', art: <><ellipse cx="15" cy="15" rx="14.5" ry="15" fill="#c8161a" /><circle cx="11" cy="8" r="6" fill="#ea4a40" opacity=".5" /><path d="M3 10c5-2 10 0 12 4 2-4 7-6 12-4-4 0-9 2-10 7v9l-2 3-2-3v-9c-1-5-6-7-10-7z" fill="#3a0709" /></> },
  { id: '头像', art: <><path d="M5 2h15l1 8 7 9-8 2 2 3-6 4H6z" fill="#e9582a" /><circle cx="16" cy="8" r="2.5" fill="#fff" stroke="#222" /><path d="M12 21c4 2 7 0 8-1" stroke="#222" /></> },
  { id: '爱奇艺', art: <><rect width="30" height="30" rx="2" fill="#0aa90f" /><path d="M4 9c1-3 4-3 11-3s10 0 11 3M4 21c1 3 4 3 11 3s10 0 11-3M26.500 9v12" stroke="#fff" strokeWidth="1.6" /><text x="14" y="19" textAnchor="middle" fontSize="11" fontWeight="700" fontFamily="Open Sans" fill="#fff">iQIY</text></> },
  { id: '播放器', open: true, art: <><path d="M6 2c3-2 22 8 23 13-1 5-20 15-23 13-4-6-4-20 0-26z" fill="#2f9be8" /><path d="M2 5c5-1 18 6 19 10-1 4-14 12-19 11-3-5-3-16 0-21z" fill="#f0912b" /><path d="M5 6c4 0 17 5 18 9-1 4-14 11-18 10-2-5-2-14 0-19z" fill="#63bb33" /><path d="m9 9 11 6-11 7z" fill="#fff" /></> },
  { id: '飞信', open: true, art: <><circle cx="14" cy="16" r="11" fill="#1e95d8" /><path d="M8 19c4-6 10-8 16-6-3 8-9 13-14 14z" fill="#72cdf2" /><path d="m3 2 14-1-6 15z" fill="#d72638" /><path d="M25 5c10 8-4 22-24 22" stroke="#eba92d" strokeWidth="2.5" /></> },
  { id: 'AutoCAD', open: true, active: true, art: <><path d="M0 0h30v30H0z" fill="#ef7b6a" /><path d="M0 0h30v12L0 24z" fill="#f5a498" /><path d="m15 2 9 19-6-1-3-4-5 5-6 1z" fill="#8f1008" /><path d="m15 6 3 9-4 1z" fill="#c93a24" /><text x="15" y="29" textAnchor="middle" fontSize="8" fontFamily="Open Sans" fill="#fff">M</text></> },
  { id: 'PowerPoint', open: true, art: <><path d="M6 1h23l-2 21H3z" fill="#f6c5a7" /><path d="M3 8h25l-3 19H1z" fill="#de5a29" /><path d="M7 11h17l-1 13H6z" fill="#fff" /><path d="M15 14h7l-1 8h-6z" fill="#de5a29" /><circle cx="18" cy="18" r="2.5" fill="#fff" /><path d="M9 15h4M9 19h4" stroke="#de5a29" strokeWidth="2" /></> },
  { id: '微信', open: true, art: <><path d="M12 2c7 0 11 4 11 10s-5 10-11 10l-5 4v-5C3 19 1 16 1 12 1 6 5 2 12 2z" fill="#6fc243" /><circle cx="8" cy="9" r="1.5" fill="#24511a" /><circle cx="16" cy="9" r="1.5" fill="#24511a" /><path d="M22 12c5 0 8 3 8 7 0 3-1 5-3 6v3l-4-2c-5 0-9-3-9-7s4-7 8-7z" fill="#f2f2f2" /><circle cx="19" cy="17" r="1.2" fill="#666" /><circle cx="25" cy="17" r="1.2" fill="#666" /></> },
];

function Taskbar() {
  return (
    <nav className="flex h-[50px] items-stretch bg-[#333130] pl-[1px] text-white">
      {apps.map(({ id, open, active, art }) => (
        <button key={id} aria-label={id} className={`flex w-[62px] flex-col items-center justify-between pt-[10px] ${active ? 'bg-[#5c5a59]' : ''}`}>
          <Svg w={30} h={30}>{art}</Svg>
          <span className={`h-[3px] ${active ? 'w-full' : 'w-[50px]'} ${open ? 'bg-[#76b1e2]' : ''}`} />
        </button>
      ))}
      <div className="flex-1" />
      <div className="flex items-center">
        <button aria-label="显示隐藏的图标"><Svg w={16} h={10}><path d="m.5 9 7.500-7.500L15.500 9" stroke="#eee" strokeWidth="1.4" /></Svg></button>
        <button aria-label="摄像头" className="ml-3"><Svg w={19} h={14}><path d="M0 2h11v9H0z" fill="#9db3a8" /><path d="M11 6h3l5-3v8l-5-2h-3z" fill="#bcd0c5" /><path d="M2 4h2v2H2zM6 4h2v2H6zM4 8h2v2H4zM4 11h6v2H4z" fill="#45544c" /></Svg></button>
        <button aria-label="音量" className="ml-[10px]"><Svg w={21} h={18}><path d="M1 6h3l5-4v14l-5-4H1z" stroke="#eee" strokeWidth="1.3" /><path d="M12 6c1.500 2 1.500 4 0 6M14.500 4c3 3 3 7 0 10" stroke="#eee" strokeWidth="1.3" /><path d="M17 2c4 4 4 10 0 14" stroke="#777" strokeWidth="1.3" /></Svg></button>
        <button className="ml-[9px] w-[17px] font-['DejaVu_Sans'] text-[22px] leading-[28px] font-bold">A</button>
        <button aria-label="搜狗输入法" className="ml-[18px] overflow-hidden rounded-[3px]"><SogouMark size={20} /></button>
        <button className="ml-[20px] w-[78px] text-[15px] leading-[23px]">
          <time className="block">20:50</time>
          <span className="block">2019/9/11</span>
        </button>
        <button aria-label="通知" className="mr-5 ml-[23px]">
          <Svg w={31} h={32}>
            <path d="M0 5h20v15H10l-4 4v-4H0z" fill="#fff" />
            <path d="M4 9h12M4 12.500h12M4 16h8" stroke="#333" strokeWidth="1.2" />
            <circle cx="19.5" cy="23.5" r="10" fill="#3b3938" stroke="#aaa" />
            <text x="19.5" y="29" textAnchor="middle" fontSize="15" fontWeight="700" fontFamily="Open Sans" fill="#fff">3</text>
          </Svg>
        </button>
      </div>
    </nav>
  );
}

export default function App() {
  return (
    <div className="relative flex h-screen flex-col overflow-hidden bg-[#666] font-['Open_Sans','Noto_Sans_CJK_SC',sans-serif]">
      <TitleBar />
      <RibbonTabs />
      <Ribbon />
      <FileTabs />
      <main className="mt-[5px] mr-[5px] flex min-h-0 flex-1 flex-col border-t-2 border-r border-l-3 border-t-[#9a9a9a] border-r-white border-l-[#9a9a9a]">
        <div className="flex min-h-0 flex-1">
          <div className="relative min-w-0 flex-1 bg-black">
            <Drawing />
            <DynamicInput />
            <CommandLine />
            <div className="absolute top-[10px] right-3 flex gap-[10px]">
              <button aria-label="最小化图形"><Svg w={10} h={10}><path d="M0 8h10" stroke="#eee" strokeWidth="3" /></Svg></button>
              <button aria-label="还原图形"><Svg w={10} h={10}><path d="M1 4h5v5H1z" stroke="#eee" strokeWidth="2" /><path d="M3 1h6.500v6" stroke="#eee" strokeWidth="1.5" /></Svg></button>
              <button aria-label="关闭图形"><Svg w={10} h={10}><path d="m1 1 8 8M9 1 1 9" stroke="#eee" strokeWidth="2.6" /></Svg></button>
            </div>
          </div>
          <ScrollColumn />
        </div>
        <LayoutTabs />
      </main>
      <StatusBar />
      <Taskbar />
      <ImeBar />
    </div>
  );
}
